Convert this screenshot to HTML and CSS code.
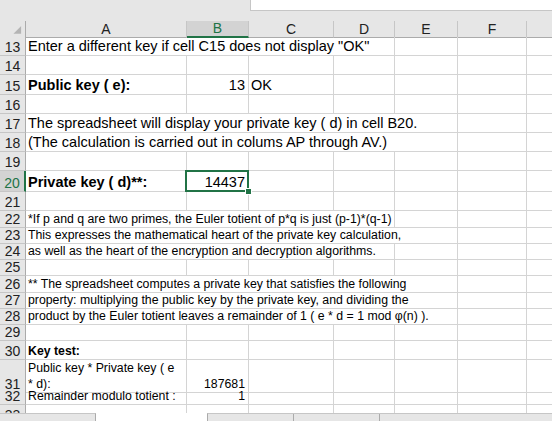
FILE: index.html
```html
<!DOCTYPE html>
<html lang="en">
<head>
    <meta charset="UTF-8">
    <title>RSA key - sheet</title>
    <link rel="stylesheet" href="styles.css">
</head>
<body>
    <div class="app">
        <div class="topbar">
            <div class="formula"></div>
        </div>

        <div class="sheet">
            <div class="row head">
                <div class="corner">
                    <svg width="26" height="16" viewBox="0 0 26 16"><polygon points="22,5 22,13 14,13" fill="#b4b4b4"/></svg>
                </div>
                <div>A</div><div class="sel">B</div><div>C</div><div>D</div><div>E</div><div>F</div><div></div>
            </div>

            <div class="row">
                <div class="n">13</div>
                <div class="span4">Enter a different key if cell C15 does not display "OK"</div>
                <div></div><div></div><div></div>
            </div>
            <div class="row">
                <div class="n">14</div>
                <div></div><div></div><div></div><div></div><div></div><div></div><div></div>
            </div>
            <div class="row h20">
                <div class="n">15</div>
                <div class="b">Public key ( e):</div>
                <div class="r">13</div>
                <div>OK</div>
                <div></div><div></div><div></div><div></div>
            </div>
            <div class="row">
                <div class="n">16</div>
                <div></div><div></div><div></div><div></div><div></div><div></div><div></div>
            </div>
            <div class="row">
                <div class="n">17</div>
                <div class="span5">The spreadsheet will display your private key ( d) in cell B20.</div>
                <div></div><div></div>
            </div>
            <div class="row">
                <div class="n">18</div>
                <div class="span5">(The calculation is carried out in colums AP through AV.)</div>
                <div></div><div></div>
            </div>
            <div class="row">
                <div class="n">19</div>
                <div></div><div></div><div></div><div></div><div></div><div></div><div></div>
            </div>
            <div class="row h21">
                <div class="n sel">20</div>
                <div class="b">Private key ( d)**:</div>
                <div class="r active">14437</div>
                <div></div><div></div><div></div><div></div><div></div>
            </div>
            <div class="row">
                <div class="n">21</div>
                <div></div><div></div><div></div><div></div><div></div><div></div><div></div>
            </div>

            <!-- notes, smaller type -->
            <div class="row h17">
                <div class="n">22</div>
                <div class="span4 s">*If p and q are two primes, the Euler totient of p*q is just (p-1)*(q-1)</div>
                <div></div><div></div><div></div>
            </div>
            <div class="row h16">
                <div class="n">23</div>
                <div class="span5 s">This expresses the mathematical heart of the private key calculation,</div>
                <div></div><div></div>
            </div>
            <div class="row h16">
                <div class="n">24</div>
                <div class="span4 s">as well as the heart of the encryption and decryption algorithms.</div>
                <div></div><div></div><div></div>
            </div>
            <div class="row h16">
                <div class="n">25</div>
                <div></div><div></div><div></div><div></div><div></div><div></div><div></div>
            </div>
            <div class="row h17">
                <div class="n">26</div>
                <div class="span5 s">** The spreadsheet computes a private key that satisfies the following</div>
                <div></div><div></div>
            </div>
            <div class="row h16">
                <div class="n">27</div>
                <div class="span5 s">property: multiplying the public key by the private key, and dividing the</div>
                <div></div><div></div>
            </div>
            <div class="row h16">
                <div class="n">28</div>
                <div class="span5 s">product by the Euler totient leaves a remainder of 1 ( e * d = 1 mod φ(n) ).</div>
                <div></div><div></div>
            </div>
            <div class="row h16">
                <div class="n">29</div>
                <div></div><div></div><div></div><div></div><div></div><div></div><div></div>
            </div>

            <div class="row">
                <div class="n">30</div>
                <div class="s b">Key test:</div>
                <div></div><div></div><div></div><div></div><div></div><div></div>
            </div>
            <div class="row h29">
                <div class="n">31</div>
                <div class="s wrap">Public key * Private key ( e<br>* d):</div>
                <div class="s r">187681</div>
                <div></div><div></div><div></div><div></div><div></div>
            </div>
            <div class="row h16">
                <div class="n">32</div>
                <div class="s">Remainder modulo totient :</div>
                <div class="s r">1</div>
                <div></div><div></div><div></div><div></div><div></div>
            </div>
            <div class="row">
                <div class="n">33</div>
                <div></div><div></div><div></div><div></div><div></div><div></div><div></div>
            </div>
        </div>

        <div class="tabbar">
            <div class="tab-a"></div>
            <div class="tab-b"></div>
            <div class="scroll">
                <div class="seg"></div>
                <div class="seg"></div>
                <div class="seg last"></div>
            </div>
        </div>
    </div>
</body>
</html>
```
FILE: styles.css
```css
body {
    margin: 0;
    font-family: "Liberation Sans", Arial, sans-serif;
    background-color: #fff;
    color: #000;
    overflow: hidden;
}
.app {
    width: 552px;
    height: 421px;
    display: flex;
    flex-direction: column;
}
.topbar {
    flex: none;
    height: 21px;
    background-color: #e6e6e6;
    display: flex;
}
.formula {
    margin-left: 250px;
    flex: 1;
    height: 11px;
    box-sizing: border-box;
    background-color: #fff;
    border-left: 1px solid #c6c6c6;
    border-bottom: 1px solid #c6c6c6;
}
.sheet {
    flex: 1;
    overflow: hidden;
}
.row {
    display: grid;
    grid-template-columns: 26px 161px 62px 85px 61px 63px 69px 1fr;
    height: 19px;
}
.row > div {
    box-sizing: border-box;
    display: flex;
    align-items: flex-end;
    padding: 0 2px 1px 2px;
    border-right: 1px solid #d4d4d4;
    border-bottom: 1px solid #d4d4d4;
    font-size: 14.5px;
    line-height: 15px;
    white-space: nowrap;
    min-width: 0;
}
.row > div:last-child {
    border-right: none;
}
.h16 { height: 16px; }
.h17 { height: 17px; }
.h20 { height: 20px; }
.h21 { height: 21px; }
.h29 { height: 29px; }

.head {
    height: 16px;
}
.head > div {
    background-color: #e6e6e6;
    border-right-color: #c6c6c6;
    border-bottom-color: #ababab;
    justify-content: center;
    align-items: center;
    padding: 0;
    font-size: 14px;
    color: #222;
}
.head > .corner {
    padding: 0;
    border-right-color: #ababab;
}
.head > .sel {
    background-color: #d3d3d3;
    color: #217346;
    border-bottom: 2px solid #217346;
}
.row > .n {
    background-color: #e6e6e6;
    border-right-color: #ababab;
    border-bottom-color: #c6c6c6;
    justify-content: center;
    padding: 0 0 1px 0;
    font-size: 14px;
    line-height: 14px;
    color: #222;
}
.row > .n.sel {
    background-color: #d3d3d3;
    color: #217346;
    border-right: 2px solid #217346;
}

.span4 { grid-column: span 4; }
.span5 { grid-column: span 5; }
.row > .b { font-weight: bold; }
.row > .r {
    justify-content: flex-end;
    padding-right: 3px;
}
.row > .s {
    font-size: 12.3px;
    line-height: 13px;
}
.row > .wrap {
    line-height: 16px;
    white-space: normal;
    padding-bottom: 0;
}

/* selected cell B20 */
.active {
    position: relative;
}
.active::before {
    content: "";
    position: absolute;
    left: -2px;
    top: -1px;
    right: -1px;
    bottom: -1px;
    border: 2px solid #217346;
}
.active::after {
    content: "";
    position: absolute;
    right: -4px;
    bottom: -4px;
    width: 5px;
    height: 5px;
    background-color: #217346;
    border: 1px solid #fff;
}

.tabbar {
    flex: none;
    height: 8px;
    display: flex;
    background-color: #fff;
}
.tab-a {
    width: 95px;
    background-color: #e6e6e6;
    border-top: 1px solid #c6c6c6;
    border-right: 1px solid #ababab;
}
.tab-b {
    width: 111px;
    background-color: #fff;
}
.scroll {
    flex: 1;
    display: flex;
    background-color: #e6e6e6;
    border-top: 1px solid #c6c6c6;
    border-left: 1px solid #ababab;
}
.seg {
    width: 85px;
    border-right: 1px solid #ababab;
}
.seg.last {
    border-right: none;
}
```
